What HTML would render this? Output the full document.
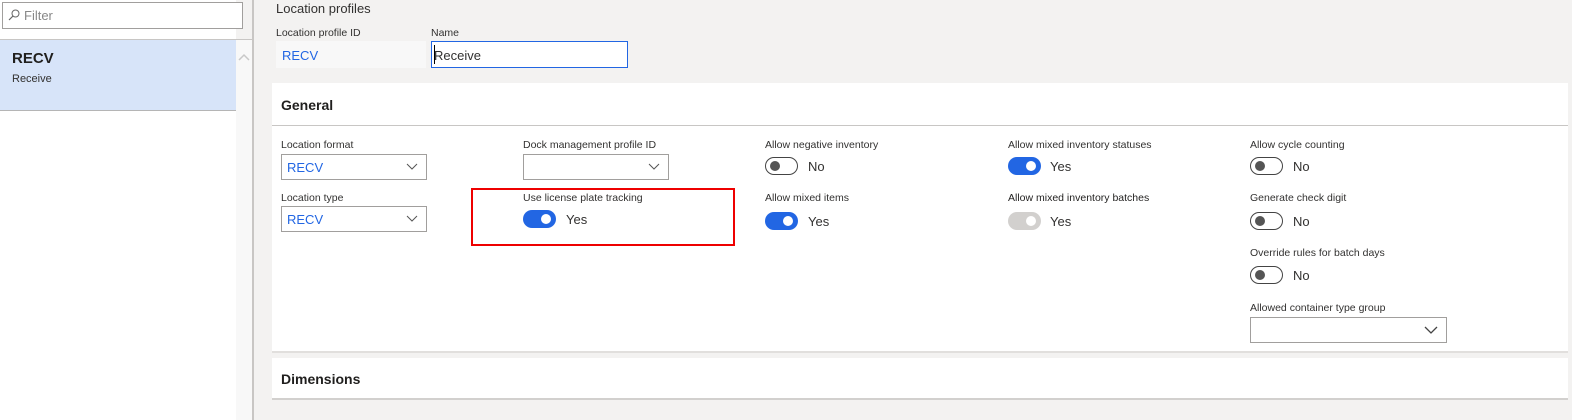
<!DOCTYPE html>
<html><head><meta charset="utf-8"><style>
*{box-sizing:border-box;margin:0;padding:0}
body{width:1572px;height:420px;overflow:hidden;background:#f3f2f1;font-family:"Liberation Sans",sans-serif;color:#323130;position:relative}
.abs{position:absolute}
.lbl{position:absolute;font-size:10.5px;color:#323130;white-space:nowrap}
.val{position:absolute;font-size:13px;white-space:nowrap}
.tg{position:absolute;width:33px;height:18px;border-radius:9px}
.tg.on{background:#2266e3}
.tg.on::after{content:"";position:absolute;right:5px;top:4px;width:10px;height:10px;border-radius:50%;background:#fff}
.tg.off{border:1px solid #444;background:#fff}
.tg.off::after{content:"";position:absolute;left:4px;top:3px;width:10px;height:10px;border-radius:50%;background:#555}
.tg.dis{background:#d2d0ce}
.tg.dis::after{content:"";position:absolute;right:5px;top:4px;width:10px;height:10px;border-radius:50%;background:#fff}
.dd{position:absolute;height:26px;border:1px solid #a19f9d;background:#fff}
.dd span{position:absolute;left:5px;top:5px;font-size:13px;color:#2266e3}
.dd svg{position:absolute;right:8px;top:8px}
</style></head><body>
<div class="abs" style="left:0;top:0;width:236px;height:420px;background:#fff"></div>
<div class="abs" style="left:236px;top:40px;width:16px;height:380px;background:#f8f8f8"></div>
<div class="abs" style="left:252px;top:0;width:2px;height:420px;background:#c8c6c4"></div>
<div class="abs" style="left:2px;top:2px;width:241px;height:27px;border:1px solid #a19f9d;background:#fff"></div>
<svg class="abs" style="left:8px;top:9px" width="12" height="12" viewBox="0 0 12 12"><circle cx="7.5" cy="4.5" r="3.5" fill="none" stroke="#666" stroke-width="1"/><path d="M5 7L1 11" stroke="#666" stroke-width="1.2"/></svg>
<div class="abs" style="left:24px;top:8px;font-size:13px;color:#888">Filter</div>
<div class="abs" style="left:0;top:40px;width:236px;height:71px;background:#d7e4f9;border-bottom:1px solid #b5b5b5"></div>
<div class="abs" style="left:0;top:39px;width:252px;height:1px;background:#c8c6c4"></div>
<div class="abs" style="left:12px;top:50px;font-size:15px;font-weight:bold;color:#201f1e">RECV</div>
<div class="abs" style="left:12px;top:73px;font-size:11px">Receive</div>
<svg class="abs" style="left:238px;top:53px" width="12" height="8" viewBox="0 0 12 8"><path d="M1 7L6 2L11 7" fill="none" stroke="#c8c8c8" stroke-width="1.5"/></svg>

<div class="abs" style="left:276px;top:1px;font-size:13px">Location profiles</div>
<div class="lbl" style="left:276px;top:27px">Location profile ID</div>
<div class="abs" style="left:276px;top:41px;width:150px;height:27px;background:#f8f8f8"></div>
<div class="val" style="left:282px;top:48px;color:#2266e3">RECV</div>
<div class="lbl" style="left:431px;top:27px">Name</div>
<div class="abs" style="left:431px;top:41px;width:197px;height:27px;border:1px solid #2266e3;background:#fff"></div>
<div class="val" style="left:434px;top:48px">Receive</div>
<div class="abs" style="left:434px;top:45px;width:1px;height:19px;background:#000"></div>

<div class="abs" style="left:272px;top:83px;width:1296px;height:270px;background:#fff;border-bottom:2px solid #e1dfdd"></div>
<div class="abs" style="left:281px;top:97px;font-size:14px;font-weight:bold;color:#201f1e">General</div>
<div class="abs" style="left:272px;top:125px;width:1296px;height:1px;background:#c8c6c4"></div>

<div class="lbl" style="left:281px;top:139px">Location format</div>
<div class="dd" style="left:281px;top:154px;width:146px"><span>RECV</span><svg width="12" height="8"><path d="M1 1L6 6L11 1" fill="none" stroke="#555"/></svg></div>
<div class="lbl" style="left:281px;top:192px">Location type</div>
<div class="dd" style="left:281px;top:206px;width:146px"><span>RECV</span><svg width="12" height="8"><path d="M1 1L6 6L11 1" fill="none" stroke="#555"/></svg></div>

<div class="lbl" style="left:523px;top:139px">Dock management profile ID</div>
<div class="dd" style="left:523px;top:154px;width:146px"><svg width="12" height="8"><path d="M1 1L6 6L11 1" fill="none" stroke="#555"/></svg></div>
<div class="abs" style="left:471px;top:188px;width:264px;height:58px;border:2px solid #e00"></div>
<div class="lbl" style="left:523px;top:192px">Use license plate tracking</div>
<div class="tg on" style="left:523px;top:210px"></div>
<div class="val" style="left:566px;top:212px">Yes</div>

<div class="lbl" style="left:765px;top:139px">Allow negative inventory</div>
<div class="tg off" style="left:765px;top:157px"></div>
<div class="val" style="left:808px;top:159px">No</div>
<div class="lbl" style="left:765px;top:192px">Allow mixed items</div>
<div class="tg on" style="left:765px;top:212px"></div>
<div class="val" style="left:808px;top:214px">Yes</div>

<div class="lbl" style="left:1008px;top:139px">Allow mixed inventory statuses</div>
<div class="tg on" style="left:1008px;top:157px"></div>
<div class="val" style="left:1050px;top:159px">Yes</div>
<div class="lbl" style="left:1008px;top:192px;color:#201f1e">Allow mixed inventory batches</div>
<div class="tg dis" style="left:1008px;top:212px"></div>
<div class="val" style="left:1050px;top:214px">Yes</div>

<div class="lbl" style="left:1250px;top:139px">Allow cycle counting</div>
<div class="tg off" style="left:1250px;top:157px"></div>
<div class="val" style="left:1293px;top:159px">No</div>
<div class="lbl" style="left:1250px;top:192px">Generate check digit</div>
<div class="tg off" style="left:1250px;top:212px"></div>
<div class="val" style="left:1293px;top:214px">No</div>
<div class="lbl" style="left:1250px;top:247px">Override rules for batch days</div>
<div class="tg off" style="left:1250px;top:266px"></div>
<div class="val" style="left:1293px;top:268px">No</div>
<div class="lbl" style="left:1250px;top:302px">Allowed container type group</div>
<div class="dd" style="left:1250px;top:317px;width:197px"><svg width="14" height="9"><path d="M1 1L7 7L13 1" fill="none" stroke="#444" stroke-width="1.3"/></svg></div>

<div class="abs" style="left:272px;top:358px;width:1296px;height:42px;background:#fff;border-bottom:2px solid #d2d0ce"></div>
<div class="abs" style="left:281px;top:371px;font-size:14px;font-weight:bold;color:#201f1e">Dimensions</div>
</body></html>
